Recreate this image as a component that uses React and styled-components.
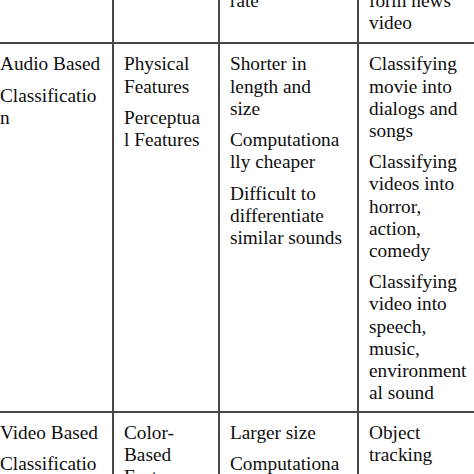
import React from 'react';
import styled, { createGlobalStyle } from 'styled-components';

const rows = [
  {
    padBottom: 8,
    cells: [
      [],
      [],
      [['Requires', 'a high', 'frame', 'rate']],
      [['Used for', 'segmenting', 'long', 'form news', 'video']],
    ],
  },
  {
    padBottom: 7,
    cells: [
      [['Audio Based'], ['Classificatio', 'n']],
      [['Physical', 'Features'], ['Perceptua', 'l Features']],
      [
        ['Shorter in', 'length and', 'size'],
        ['Computationa', 'lly cheaper'],
        ['Difficult to', 'differentiate', 'similar sounds'],
      ],
      [
        ['Classifying', 'movie into', 'dialogs and', 'songs'],
        ['Classifying', 'videos into', 'horror,', 'action,', 'comedy'],
        ['Classifying', 'video into', 'speech,', 'music,', 'environment', 'al sound'],
      ],
    ],
  },
  {
    padBottom: 7,
    cells: [
      [['Video Based'], ['Classificatio', 'n']],
      [['Color-', 'Based', 'Features']],
      [['Larger size'], ['Computationa', 'lly costly']],
      [['Object', 'tracking']],
    ],
  },
];

const widths = [124, 106, 139, 131];

const App = () => {
  return (
    <>
      <GlobalStyle />
      <Viewport>
        <Table>
          <colgroup>
            {widths.map((w, i) => (
              <col key={i} style={{ width: w }} />
            ))}
          </colgroup>
          <tbody>
            {rows.map((row, r) => (
              <tr key={r}>
                {row.cells.map((paras, c) => (
                  <Cell key={c} $padBottom={row.padBottom}>
                    {paras.map((lines, p) => (
                      <Para key={p}>
                        {lines.map((line, l) => (
                          <Line key={l}>{line}</Line>
                        ))}
                      </Para>
                    ))}
                  </Cell>
                ))}
              </tr>
            ))}
          </tbody>
        </Table>
      </Viewport>
    </>
  );
};

const GlobalStyle = createGlobalStyle`
  html, body {
    margin: 0;
    padding: 0;
    background: #fff;
  }
  body {
    font-family: "Liberation Serif", "Times New Roman", serif;
  }
`;
const Viewport = styled.div`
  width: 474px;
  height: 474px;
  overflow: hidden;
  background: #fff;
`;
const Table = styled.table`
  border-collapse: collapse;
  table-layout: fixed;
  width: 500px;
  margin-top: -87px;
  margin-left: -12px;
  color: #0e0e0e;
  font-size: 19.3px;
  line-height: 22.1px;
`;
const Cell = styled.td`
  border: 2px solid #474747;
  vertical-align: top;
  padding: 9px 10px ${(p) => p.$padBottom}px 10px;
`;
const Para = styled.p`
  margin: 0;
  & + & {
    margin-top: 9.5px;
  }
`;
const Line = styled.span`
  display: block;
  white-space: nowrap;
`;

export default App;
